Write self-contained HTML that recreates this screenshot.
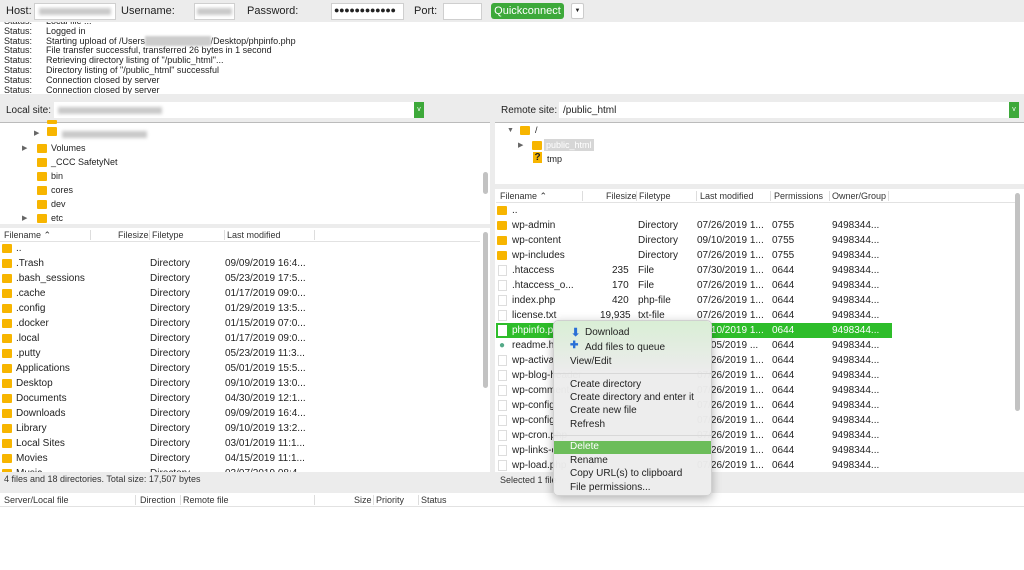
<!DOCTYPE html>
<html><head><meta charset="utf-8"><style>
*{margin:0;padding:0;box-sizing:border-box}
body{width:1024px;height:570px;overflow:hidden;background:#ececec;font-family:"Liberation Sans",sans-serif;font-size:10px;color:#222;position:relative}
.a{position:absolute;white-space:nowrap}
.w{position:absolute;background:#fff}
.in{position:absolute;background:#fff;border:1px solid #cfcfcf;height:17px;top:3px}
.blur{position:absolute;background:#c9c9c9;filter:blur(1.5px);height:7px}
.tl{position:absolute;top:5px;font-size:11px;white-space:nowrap}
.row{position:absolute;height:15px;line-height:15px;white-space:nowrap}
.row span{position:absolute}
.fo{position:absolute;width:10px;height:9px;background:#f7b500;border-radius:1px;top:3px}
.fi{position:absolute;width:9px;height:11px;background:#fff;border:1px solid #ddd;top:2px}
.hd{position:absolute;height:14px;line-height:14px;color:#333;background:#fff;border-bottom:1px solid #e2e2e2;white-space:nowrap}
.hd span{position:absolute}
.sep{position:absolute;top:2px;width:1px;height:10px;background:#ddd}
.menu{position:absolute;left:553px;top:320px;width:159px;height:176px;background:rgba(236,236,236,.97);border-radius:5px;box-shadow:0 3px 10px rgba(0,0,0,.3);border:1px solid #d0d0d0}
.mi{position:absolute;left:16px;font-size:10px;color:#222;white-space:nowrap}
.sb{position:absolute;background:#c2c2c2;border-radius:3px;width:5px}
</style></head><body>
<!-- toolbar -->
<div class="tl" style="left:6px">Host:</div>
<div class="in" style="left:34px;width:82px"></div><div class="blur" style="left:39px;top:8px;width:72px"></div>
<div class="tl" style="left:121px">Username:</div>
<div class="in" style="left:194px;width:41px"></div><div class="blur" style="left:197px;top:8px;width:35px"></div>
<div class="tl" style="left:247px">Password:</div>
<div class="in" style="left:331px;width:73px"></div><div class="a" style="left:334px;top:5px;font-size:9px;letter-spacing:-0.3px">●●●●●●●●●●●●</div>
<div class="tl" style="left:414px">Port:</div>
<div class="in" style="left:443px;width:39px"></div>
<div class="a" style="left:491px;top:3px;width:73px;height:16px;background:#3da93a;border-radius:3px;color:#fff;text-align:center;line-height:16px;font-size:11px">Quickconnect</div>
<div class="a" style="left:571px;top:3px;width:13px;height:16px;background:#fff;border:1px solid #ccc;border-radius:2px;font-size:6px;text-align:center;line-height:14px">▼</div>
<!-- log -->
<div class="w" style="left:0;top:22px;width:1024px;height:72px"></div>
<div style="position:absolute;left:0;top:22px;width:1024px;height:72px;overflow:hidden">
<div class="a" style="left:4px;top:-5px;line-height:9.8px;font-size:9px">Status:<br>Status:<br>Status:<br>Status:<br>Status:<br>Status:<br>Status:<br>Status:</div>
<div class="a" style="left:46px;top:-5px;line-height:9.8px;font-size:9px">Local file ...<br>Logged in<br>Starting upload of /Users<span style="background:#ccc;color:#ccc;filter:blur(1px)">/xxxxxxxxxxxxxx</span>/Desktop/phpinfo.php<br>File transfer successful, transferred 26 bytes in 1 second<br>Retrieving directory listing of "/public_html"...<br>Directory listing of "/public_html" successful<br>Connection closed by server<br>Connection closed by server</div>
</div>
<!-- local site bar -->
<div class="a" style="left:6px;top:105px;font-size:10px">Local site:</div>
<div class="in" style="left:54px;top:102px;width:368px;height:16px;border:none"></div>
<div class="blur" style="left:58px;top:107px;width:104px"></div>
<div class="a" style="left:414px;top:102px;width:10px;height:16px;background:#3da93a;color:#fff;font-size:7px;text-align:center;line-height:16px">v</div>
<div class="w" style="left:0;top:122px;width:490px;height:102px;border-top:1px solid #bbb"></div>
<div class="sb" style="left:483px;top:172px;height:22px"></div>
<div class="fo" style="left:47px;top:120px;height:4px"></div>
<div class="a" style="left:34px;top:129px;font-size:7px;color:#666">▶</div><div class="fo" style="left:47px;top:127px"></div><div class="blur" style="left:62px;top:131px;width:85px"></div>
<div class="row" style="left:0;top:141px;width:480px"><span style="left:22px;font-size:7px;color:#666">▶</span><div class="fo" style="left:37px"></div><span style="left:51px;font-size:9px">Volumes</span></div>
<div class="row" style="left:0;top:155px;width:480px"><div class="fo" style="left:37px"></div><span style="left:51px;font-size:9px">_CCC SafetyNet</span></div>
<div class="row" style="left:0;top:169px;width:480px"><div class="fo" style="left:37px"></div><span style="left:51px;font-size:9px">bin</span></div>
<div class="row" style="left:0;top:183px;width:480px"><div class="fo" style="left:37px"></div><span style="left:51px;font-size:9px">cores</span></div>
<div class="row" style="left:0;top:197px;width:480px"><div class="fo" style="left:37px"></div><span style="left:51px;font-size:9px">dev</span></div>
<div class="row" style="left:0;top:211px;width:480px"><span style="left:22px;font-size:7px;color:#666">▶</span><div class="fo" style="left:37px"></div><span style="left:51px;font-size:9px">etc</span></div>
<!-- local list -->
<div class="w" style="left:0;top:228px;width:490px;height:244px"></div>
<div class="hd" style="left:0;top:228px;width:480px;font-size:9px"><span style="left:4px">Filename ⌃</span><div class="sep" style="left:90px"></div><span style="left:118px">Filesize</span><div class="sep" style="left:149px"></div><span style="left:152px">Filetype</span><div class="sep" style="left:224px"></div><span style="left:227px">Last modified</span><div class="sep" style="left:314px"></div></div>
<div class="sb" style="left:483px;top:232px;height:156px"></div>
<div style="position:absolute;left:0;top:241px;width:480px;height:231px;overflow:hidden">
<div class="row" style="top:0"><div class="fo" style="left:2px"></div><span style="left:16px">..</span></div>
<div class="row" style="top:15px"><div class="fo" style="left:2px"></div><span style="left:16px">.Trash</span><span style="left:150px">Directory</span><span style="left:225px">09/09/2019 16:4...</span></div>
<div class="row" style="top:30px"><div class="fo" style="left:2px"></div><span style="left:16px">.bash_sessions</span><span style="left:150px">Directory</span><span style="left:225px">05/23/2019 17:5...</span></div>
<div class="row" style="top:45px"><div class="fo" style="left:2px"></div><span style="left:16px">.cache</span><span style="left:150px">Directory</span><span style="left:225px">01/17/2019 09:0...</span></div>
<div class="row" style="top:60px"><div class="fo" style="left:2px"></div><span style="left:16px">.config</span><span style="left:150px">Directory</span><span style="left:225px">01/29/2019 13:5...</span></div>
<div class="row" style="top:75px"><div class="fo" style="left:2px"></div><span style="left:16px">.docker</span><span style="left:150px">Directory</span><span style="left:225px">01/15/2019 07:0...</span></div>
<div class="row" style="top:90px"><div class="fo" style="left:2px"></div><span style="left:16px">.local</span><span style="left:150px">Directory</span><span style="left:225px">01/17/2019 09:0...</span></div>
<div class="row" style="top:105px"><div class="fo" style="left:2px"></div><span style="left:16px">.putty</span><span style="left:150px">Directory</span><span style="left:225px">05/23/2019 11:3...</span></div>
<div class="row" style="top:120px"><div class="fo" style="left:2px"></div><span style="left:16px">Applications</span><span style="left:150px">Directory</span><span style="left:225px">05/01/2019 15:5...</span></div>
<div class="row" style="top:135px"><div class="fo" style="left:2px"></div><span style="left:16px">Desktop</span><span style="left:150px">Directory</span><span style="left:225px">09/10/2019 13:0...</span></div>
<div class="row" style="top:150px"><div class="fo" style="left:2px"></div><span style="left:16px">Documents</span><span style="left:150px">Directory</span><span style="left:225px">04/30/2019 12:1...</span></div>
<div class="row" style="top:165px"><div class="fo" style="left:2px"></div><span style="left:16px">Downloads</span><span style="left:150px">Directory</span><span style="left:225px">09/09/2019 16:4...</span></div>
<div class="row" style="top:180px"><div class="fo" style="left:2px"></div><span style="left:16px">Library</span><span style="left:150px">Directory</span><span style="left:225px">09/10/2019 13:2...</span></div>
<div class="row" style="top:195px"><div class="fo" style="left:2px"></div><span style="left:16px">Local Sites</span><span style="left:150px">Directory</span><span style="left:225px">03/01/2019 11:1...</span></div>
<div class="row" style="top:210px"><div class="fo" style="left:2px"></div><span style="left:16px">Movies</span><span style="left:150px">Directory</span><span style="left:225px">04/15/2019 11:1...</span></div>
<div class="row" style="top:225px"><div class="fo" style="left:2px"></div><span style="left:16px">Music</span><span style="left:150px">Directory</span><span style="left:225px">03/07/2019 08:4...</span></div>
</div>
<div class="a" style="left:4px;top:474px;font-size:9px;color:#333">4 files and 18 directories. Total size: 17,507 bytes</div>
<!-- remote -->
<div class="a" style="left:501px;top:105px">Remote site:</div>
<div class="in" style="left:559px;top:102px;width:458px;height:16px;border:none"></div>
<div class="a" style="left:563px;top:105px">/public_html</div>
<div class="a" style="left:1009px;top:102px;width:10px;height:16px;background:#3da93a;color:#fff;font-size:7px;text-align:center;line-height:16px">v</div>
<div class="w" style="left:495px;top:122px;width:529px;height:62px;border-top:1px solid #bbb"></div>
<div class="a" style="left:507px;top:127px;font-size:7px;color:#666">▼</div><div class="fo" style="left:520px;top:126px"></div><div class="a" style="left:535px;top:125px;font-size:9px">/</div>
<div class="a" style="left:518px;top:141px;font-size:7px;color:#666">▶</div><div class="fo" style="left:532px;top:141px"></div><div class="a" style="left:544px;top:139px;background:#d6d6d6;color:#fff;font-size:9px;padding:1px 2px">public_html</div>
<div class="a" style="left:533px;top:152px;width:9px;height:11px;background:#f7b500;font-weight:bold;font-size:10px;line-height:11px;text-align:center">?</div><div class="a" style="left:547px;top:154px;font-size:9px">tmp</div>
<div class="w" style="left:495px;top:189px;width:529px;height:283px"></div>
<div class="hd" style="left:496px;top:189px;width:520px;font-size:9px"><span style="left:4px">Filename ⌃</span><div class="sep" style="left:86px"></div><span style="left:110px">Filesize</span><div class="sep" style="left:140px"></div><span style="left:143px">Filetype</span><div class="sep" style="left:200px"></div><span style="left:204px">Last modified</span><div class="sep" style="left:274px"></div><span style="left:278px">Permissions</span><div class="sep" style="left:333px"></div><span style="left:336px">Owner/Group</span><div class="sep" style="left:392px"></div></div>
<div class="sb" style="left:1015px;top:193px;height:218px"></div>
<div style="position:absolute;left:496px;top:203px;width:518px;height:269px;overflow:hidden">
<div class="row" style="top:0;width:400px"><div class="fo" style="left:1px"></div><span style="left:16px">..</span></div>
<div class="row" style="top:15px;width:400px"><div class="fo" style="left:1px"></div><span style="left:16px">wp-admin</span><span style="left:142px">Directory</span><span style="left:201px">07/26/2019 1...</span><span style="left:276px">0755</span><span style="left:336px">9498344...</span></div>
<div class="row" style="top:30px;width:400px"><div class="fo" style="left:1px"></div><span style="left:16px">wp-content</span><span style="left:142px">Directory</span><span style="left:201px">09/10/2019 1...</span><span style="left:276px">0755</span><span style="left:336px">9498344...</span></div>
<div class="row" style="top:45px;width:400px"><div class="fo" style="left:1px"></div><span style="left:16px">wp-includes</span><span style="left:142px">Directory</span><span style="left:201px">07/26/2019 1...</span><span style="left:276px">0755</span><span style="left:336px">9498344...</span></div>
<div class="row" style="top:60px;width:400px"><div class="fi" style="left:2px"></div><span style="left:16px">.htaccess</span><span style="left:116px">235</span><span style="left:142px">File</span><span style="left:201px">07/30/2019 1...</span><span style="left:276px">0644</span><span style="left:336px">9498344...</span></div>
<div class="row" style="top:75px;width:400px"><div class="fi" style="left:2px"></div><span style="left:16px">.htaccess_o...</span><span style="left:116px">170</span><span style="left:142px">File</span><span style="left:201px">07/26/2019 1...</span><span style="left:276px">0644</span><span style="left:336px">9498344...</span></div>
<div class="row" style="top:90px;width:400px"><div class="fi" style="left:2px"></div><span style="left:16px">index.php</span><span style="left:116px">420</span><span style="left:142px">php-file</span><span style="left:201px">07/26/2019 1...</span><span style="left:276px">0644</span><span style="left:336px">9498344...</span></div>
<div class="row" style="top:105px;width:400px"><div class="fi" style="left:2px"></div><span style="left:16px">license.txt</span><span style="left:104px">19,935</span><span style="left:142px">txt-file</span><span style="left:201px">07/26/2019 1...</span><span style="left:276px">0644</span><span style="left:336px">9498344...</span></div>
<div class="row" style="top:120px;width:396px;background:#2ebd2a;color:#fff"><div class="fi" style="left:2px;border-color:#fff"></div><span style="left:16px">phpinfo.php</span><span style="left:201px">09/10/2019 1...</span><span style="left:276px">0644</span><span style="left:336px">9498344...</span></div>
<div class="row" style="top:135px;width:400px"><span style="left:3px;color:#5a8">●</span><span style="left:16px">readme.html</span><span style="left:201px">07/05/2019 ...</span><span style="left:276px">0644</span><span style="left:336px">9498344...</span></div>
<div class="row" style="top:150px;width:400px"><div class="fi" style="left:2px"></div><span style="left:16px">wp-activate.php</span><span style="left:201px">07/26/2019 1...</span><span style="left:276px">0644</span><span style="left:336px">9498344...</span></div>
<div class="row" style="top:165px;width:400px"><div class="fi" style="left:2px"></div><span style="left:16px">wp-blog-header</span><span style="left:201px">07/26/2019 1...</span><span style="left:276px">0644</span><span style="left:336px">9498344...</span></div>
<div class="row" style="top:180px;width:400px"><div class="fi" style="left:2px"></div><span style="left:16px">wp-comments</span><span style="left:201px">07/26/2019 1...</span><span style="left:276px">0644</span><span style="left:336px">9498344...</span></div>
<div class="row" style="top:195px;width:400px"><div class="fi" style="left:2px"></div><span style="left:16px">wp-config</span><span style="left:201px">07/26/2019 1...</span><span style="left:276px">0644</span><span style="left:336px">9498344...</span></div>
<div class="row" style="top:210px;width:400px"><div class="fi" style="left:2px"></div><span style="left:16px">wp-config</span><span style="left:201px">07/26/2019 1...</span><span style="left:276px">0644</span><span style="left:336px">9498344...</span></div>
<div class="row" style="top:225px;width:400px"><div class="fi" style="left:2px"></div><span style="left:16px">wp-cron.php</span><span style="left:201px">07/26/2019 1...</span><span style="left:276px">0644</span><span style="left:336px">9498344...</span></div>
<div class="row" style="top:240px;width:400px"><div class="fi" style="left:2px"></div><span style="left:16px">wp-links-opml</span><span style="left:201px">07/26/2019 1...</span><span style="left:276px">0644</span><span style="left:336px">9498344...</span></div>
<div class="row" style="top:255px;width:400px"><div class="fi" style="left:2px"></div><span style="left:16px">wp-load.php</span><span style="left:201px">07/26/2019 1...</span><span style="left:276px">0644</span><span style="left:336px">9498344...</span></div>
</div>
<div class="a" style="left:500px;top:475px;font-size:9px;color:#333">Selected 1 file</div>
<!-- queue -->
<div class="w" style="left:0;top:493px;width:1024px;height:77px"></div>
<div class="hd" style="left:0;top:493px;width:1024px;font-size:9px;background:#fff"><span style="left:4px">Server/Local file</span><div class="sep" style="left:135px"></div><span style="left:140px">Direction</span><div class="sep" style="left:180px"></div><span style="left:183px">Remote file</span><div class="sep" style="left:314px"></div><span style="left:354px">Size</span><div class="sep" style="left:373px"></div><span style="left:376px">Priority</span><div class="sep" style="left:418px"></div><span style="left:421px">Status</span></div>
<!-- context menu -->
<div class="menu">
<div class="a" style="left:0;top:0;width:157px;height:50px;background:linear-gradient(#d9eed5,#ececec);border-radius:5px 5px 0 0"></div>
<div class="a" style="left:17px;top:5px;color:#2a6fd6;font-size:11px;font-weight:bold">⬇</div>
<div class="mi" style="top:6px;left:31px">Download</div>
<div class="a" style="left:16px;top:19px;color:#2a6fd6;font-size:10px;font-weight:bold">✚</div>
<div class="mi" style="top:21px;left:31px">Add files to queue</div>
<div class="mi" style="top:35px">View/Edit</div>
<div class="a" style="left:0;top:52px;width:157px;height:1px;background:#d8d8d8"></div>
<div class="mi" style="top:58px">Create directory</div>
<div class="mi" style="top:71px">Create directory and enter it</div>
<div class="mi" style="top:84px">Create new file</div>
<div class="mi" style="top:98px">Refresh</div>
<div class="a" style="left:0;top:114px;width:157px;height:1px;background:#d8d8d8"></div>
<div class="a" style="left:0;top:120px;width:157px;height:13px;background:#6cbd5a"></div>
<div class="mi" style="top:120px;color:#fff">Delete</div>
<div class="mi" style="top:134px">Rename</div>
<div class="mi" style="top:147px">Copy URL(s) to clipboard</div>
<div class="mi" style="top:161px">File permissions...</div>
</div>
</body></html>
